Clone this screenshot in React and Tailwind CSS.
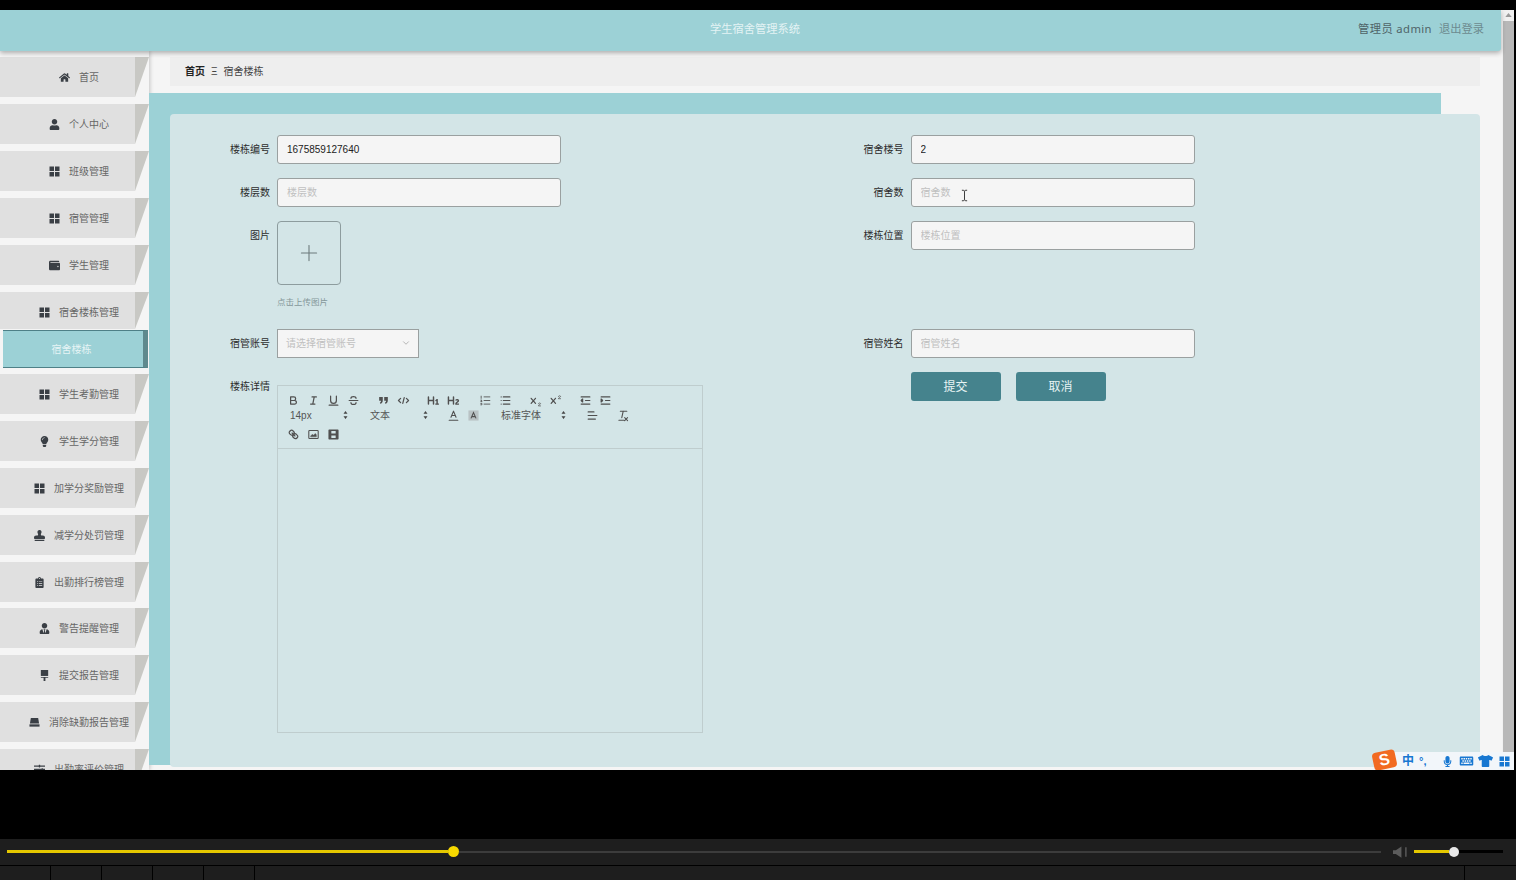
import { FaHome, FaUser, FaWallet, FaLightbulb, FaClipboardList, FaStamp, FaUserTie, FaSlidersH, FaMicrophone, FaKeyboard, FaTshirt } from "react-icons/fa";
import { ChevronDown, Plus } from "lucide-react";

const Grid = (props) => (
  <svg viewBox="0 0 11 11" {...props}>
    <path d="M0.500 0.500h4.500v4.500H0.500zM6 0.500h4.500v4.500H6zM0.500 6h4.500v4.500H0.500zM6 6h4.500v4.500H6z" fill="currentColor" />
  </svg>
);

const Brush = (props) => (
  <svg viewBox="0 0 12 12" {...props}>
    <path d="M2 0h8v6.500H2z" fill="currentColor" />
    <path d="M2 7.500h8v1H7v3.500H5V8.500H2z" fill="currentColor" />
  </svg>
);

const Tray = (props) => (
  <svg viewBox="0 0 12 12" {...props}>
    <path d="M2 1h8l1 6H1z" fill="currentColor" />
    <path d="M0.500 8h11v2.500h-11z" fill="currentColor" />
  </svg>
);

const menuTop = [
  { label: "首页", icon: FaHome },
  { label: "个人中心", icon: FaUser },
  { label: "班级管理", icon: Grid },
  { label: "宿管管理", icon: Grid },
  { label: "学生管理", icon: FaWallet },
];

const menuBottom = [
  { label: "学生考勤管理", icon: Grid },
  { label: "学生学分管理", icon: FaLightbulb },
  { label: "加学分奖励管理", icon: Grid },
  { label: "减学分处罚管理", icon: FaStamp },
  { label: "出勤排行榜管理", icon: FaClipboardList, tight: true },
  { label: "警告提醒管理", icon: FaUserTie },
  { label: "提交报告管理", icon: Brush },
  { label: "消除缺勤报告管理", icon: Tray },
  { label: "出勤率评价管理", icon: FaSlidersH },
];

const MenuItem = ({ label, icon: Icon, short, tight }) => (
  <div className={short ? "flex h-[37px] mb-[1px] shrink-0" : tight ? "flex h-[40px] mb-[6px] shrink-0" : "flex h-[40px] mb-[7px] shrink-0"}>
    <div
      className={
        short
          ? "w-[135px] bg-[#e0e0e0] flex items-center justify-center pl-[23px] pt-[3px] text-[10px] text-[#666]"
          : "w-[135px] bg-[#e0e0e0] flex items-center justify-center pl-[23px] text-[10px] text-[#666]"
      }
    >
      <Icon className="w-[11px] h-[11px] mr-[9px] text-[#3a3f45]" />
      <span className="whitespace-nowrap">{label}</span>
    </div>
    <div
      className={
        short
          ? "w-0 h-0 border-t-[37px] border-r-[14px] border-t-[#c8c8c4] border-r-transparent"
          : "w-0 h-0 border-t-[40px] border-r-[14px] border-t-[#c8c8c4] border-r-transparent"
      }
    />
  </div>
);

const Sidebar = () => (
  <aside className="w-[149px] shrink-0 h-full bg-[#f5f5f5] pt-[6px] flex flex-col overflow-hidden shadow-[1px_0_4px_rgba(0,0,0,0.2)]">
    {menuTop.map((m) => (
      <MenuItem key={m.label} {...m} />
    ))}
    <MenuItem label="宿舍楼栋管理" icon={Grid} short />
    {/* active child */}
    <div className="ml-[3px] w-[145px] h-[38px] mb-[6px] shrink-0 flex items-center justify-center pr-[3px] bg-[#9cd1d6] border-y border-y-[#4e8087] border-r-[5px] border-r-[#5f8a8e] text-[10px] text-[#e6f4f5]">
      宿舍楼栋
    </div>
    {menuBottom.map((m) => (
      <MenuItem key={m.label} {...m} />
    ))}
  </aside>
);

const Label = ({ children }) => (
  <label className="w-[100px] h-[29px] shrink-0 mr-[7px] text-right leading-[29px] text-[10px] text-[#2c2c2c]">{children}</label>
);

const Field = ({ label, value, placeholder, cursor }) => (
  <div className="flex">
    <Label>{label}</Label>
    <div className="relative">
      <input
        readOnly
        defaultValue={value}
        placeholder={placeholder}
        className="block w-[284px] h-[29px] px-[9px] pb-[1px] bg-[#f5f5f5] border border-[#9aa0a0] rounded-[3px] text-[10px] text-[#222] outline-none placeholder:text-[#c0c0c0]"
      />
      {cursor && (
        <svg viewBox="0 0 8 14" className="absolute left-[50px] top-[11px] w-[7px] h-[13px] text-[#222]">
          <path d="M1 1h2l1 1 1-1h2M4 2v10M1 13h2l1-1 1 1h2" fill="none" stroke="currentColor" strokeWidth="1" />
        </svg>
      )}
    </div>
  </div>
);

const Ico = ({ children, filled }) => (
  <span className="w-5 h-4 flex items-center justify-center shrink-0">
    <svg
      viewBox="0 0 18 18"
      className="w-[13px] h-[13px]"
      fill={filled ? "#505050" : "none"}
      stroke={filled ? "none" : "#505050"}
      strokeWidth="1.700"
      strokeLinecap="round"
      strokeLinejoin="round"
    >
      {children}
    </svg>
  </span>
);

const Picker = ({ label, className }) => (
  <span className={`flex items-center justify-between pl-[7px] pr-[5px] text-[10px] text-[#555] shrink-0 ${className}`}>
    {label}
    <svg viewBox="0 0 6 10" className="w-[5px] h-[8px]">
      <path d="M3 0l2.500 3.500h-5zM3 10L.5 6.500h5z" fill="#444" />
    </svg>
  </span>
);

const Toolbar = () => (
  <div className="h-[63px] border-b border-b-[#bfcdce] pt-[6px] pl-[5px] flex flex-col">
    <div className="h-4 flex items-center">
      <div className="flex mr-[10px]">
        <Ico><path d="M5,4H9.500A2.500,2.500,0,0,1,12,6.500v0A2.500,2.500,0,0,1,9.500,9H5V4Z" /><path d="M5,9h5.500A2.500,2.500,0,0,1,13,11.500v0A2.500,2.500,0,0,1,10.500,14H5V9Z" /></Ico>
        <Ico><path d="M7 4h6M5 14h6M8 14l2-10" /></Ico>
        <Ico><path d="M5,3V9a4,4,0,0,0,4,4h0a4,4,0,0,0,4-4V3M3 15.500h12" /></Ico>
        <Ico><path d="M3 9h12M12.500 6C12.500 4.500 11 3.500 9 3.500S5.500 4.500 5.500 6M12.500 12c0 1.500-1.500 2.500-3.500 2.500S5.500 13.500 5.500 12" /></Ico>
      </div>
      <div className="flex mr-[10px]">
        <Ico filled><path d="M3 4h5v5c0 3-1.500 4-3.500 4.500L4 12c1-.5 1.500-1 1.500-2.500H3zM10 4h5v5c0 3-1.500 4-3.500 4.500L11 12c1-.5 1.500-1 1.500-2.500H10z" /></Ico>
        <Ico><path d="M5 6L2 9l3 3M13 6l3 3-3 3M10 5l-2 8" /></Ico>
      </div>
      <div className="flex mr-[12px]">
        <Ico filled><path d="M10,4V14a1,1,0,0,1-2,0V10H3v4a1,1,0,0,1-2,0V4A1,1,0,0,1,3,4V8H8V4a1,1,0,0,1,2,0ZM16 13.200H15V7.600c0-.4-.2-.6-.6-.6h-.6a1,1,0,0,0-.8.300L11.600 8.600a.5.5,0,0,0,0,.9l.3.3a.5.5,0,0,0,.8,0l.1-.1.2-.3v3.800h-1c-.4,0-.6.200-.6.600v.4c0,.4.200.6.600.6h4c.4,0,.6-.2.6-.6v-.4c0-.4-.2-.6-.6-.6Z" /></Ico>
        <Ico filled><path d="M16.700,13.800v.4c0,.4-.2.6-.6.6H11.900c-.4,0-.6-.2-.6-.6V14c0-2.900,3.400-3.400,3.400-4.500a.8.8,0,0,0-.8-.8,1.200,1.200,0,0,0-.8.4c-.3.300-.6.4-.9.1l-.4-.3c-.3-.2-.4-.5-.2-.8a3,3,0,0,1,2.500-1.200,2.500,2.500,0,0,1,2.700,2.400c0,2.500-3.200,2.900-3.300,3.900h2.800C16.500,13.200,16.700,13.400,16.700,13.800ZM9,3A1,1,0,0,0,8,4V8H3V4A1,1,0,0,0,1,4V14a1,1,0,0,0,2,0V10H8v4a1,1,0,0,0,2,0V4A1,1,0,0,0,9,3Z" /></Ico>
      </div>
      <div className="flex mr-[10px]">
        <Ico><path d="M7 4h8M7 9h8M7 14h8M3 3v3M2.500 8.500h1.500l-1.500 2h1.500M2.500 13h1.500v2h-1.500" strokeWidth="1.200" /></Ico>
        <Ico><path d="M6 4h9M6 9h9M6 14h9M3 4h0M3 9h0M3 14h0" /></Ico>
      </div>
      <div className="flex mr-[10px]">
        <Ico><path d="M3 6l6 7M9 6l-6 7" /><path d="M13 13.500c0-1.500 3-1.500 3 0 0 1-3 1.500-3 3h3" strokeWidth="1" /></Ico>
        <Ico><path d="M3 6l6 7M9 6l-6 7" /><path d="M13 3.500c0-1.500 3-1.500 3 0 0 1-3 1.500-3 3h3" strokeWidth="1" /></Ico>
      </div>
      <div className="flex">
        <Ico><path d="M3 4h12M3 14h12M9 9h6" /><path d="M5 7v4l-2-2z" fill="#505050" /></Ico>
        <Ico><path d="M3 4h12M3 14h12M9 9h6" /><path d="M3 7v4l2-2z" fill="#505050" /></Ico>
      </div>
    </div>
    <div className="h-[14px] flex items-center">
      <Picker label="14px" className="w-[70px] mr-[10px]" />
      <Picker label="文本" className="w-[70px] mr-[10px]" />
      <Ico><path d="M3 15.500h12M5.500 11.500L9 3l3.500 8.500M6.500 9h5" strokeWidth="1.500" /></Ico>
      <span className="w-5 h-4 flex items-center justify-center shrink-0">
        <svg viewBox="0 0 18 18" className="w-[13px] h-[13px]" fill="none" stroke="#505050" strokeWidth="1.500">
          <rect x="2" y="2" width="14" height="14" fill="#b9c2c4" stroke="none" />
          <path d="M5.500 13L9 5l3.500 8M6.500 10.500h5" />
        </svg>
      </span>
      <Picker label="标准字体" className="w-[77px] ml-[11px] mr-[11px]" />
      <span className="mr-[10px]">
        <Ico><path d="M3 4h8M3 9h12M3 14h10" /></Ico>
      </span>
      <Ico><path d="M6 3h9M10 3L8 12M4 15.500h7M12 12l4 4M16 12l-4 4" strokeWidth="1.500" /></Ico>
    </div>
    <div className="h-4 mt-[4px] flex items-center">
      <Ico>
        <path d="M7 7l4 4" />
        <path d="M8.900,4.600a3.500,3.500,0,0,1,.4,4.700A3.500,3.500,0,0,1,4.600,8.900C3.200,7.500,2,6.400,4.200,4.200S7.500,3.200,8.900,4.600Z" />
        <path d="M13.400,9.100a3.500,3.500,0,0,0-4.700-.4,3.500,3.500,0,0,0,.4,4.700c1.400,1.400,2.500,2.500,4.700.4S14.800,10.500,13.400,9.100Z" />
      </Ico>
      <Ico>
        <rect x="2.500" y="3.500" width="13" height="11" rx="1" strokeWidth="1.500" />
        <path d="M5 12V11l2.500-2.500 1.500 1.500 2.500-2.500L13 9.500V12z" fill="#505050" strokeWidth="0.500" />
      </Ico>
      <Ico filled>
        <path fillRule="evenodd" d="M3 2h12a1 1 0 0 1 1 1v12a1 1 0 0 1-1 1H3a1 1 0 0 1-1-1V3a1 1 0 0 1 1-1zM6 4v3.500h6V4zM6 10.500V14h6v-3.500z" />
      </Ico>
    </div>
  </div>
);

const FormCard = () => (
  <div className="w-[1310px] h-[653px] shrink-0 bg-[#d3e5e7] rounded-[4px] pt-[21px] grid grid-cols-[633.500px_1fr] gap-y-[14px] content-start">
    <Field label="楼栋编号" value="1675859127640" />
    <Field label="宿舍楼号" value="2" />
    <Field label="楼层数" placeholder="楼层数" />
    <Field label="宿舍数" placeholder="宿舍数" cursor />

    <div className="flex h-[94px]">
      <Label>图片</Label>
      <div>
        <div className="w-[64px] h-[64px] border border-[#8d9c9e] rounded-[4px] flex items-center justify-center">
          <Plus className="w-[26px] h-[26px] text-[#6c7a7c]" strokeWidth={1} />
        </div>
        <p className="mt-[12px] text-[8.500px] leading-[10px] text-[#84979a]">点击上传图片</p>
      </div>
    </div>
    <Field label="楼栋位置" placeholder="楼栋位置" />

    <div className="flex">
      <Label>宿管账号</Label>
      <div className="w-[142px] h-[29px] pl-[8px] pr-[7px] pb-[1px] bg-[#f5f5f5] border border-[#9aa0a0] flex items-center justify-between text-[10px] text-[#c0c0c0]">
        请选择宿管账号
        <ChevronDown className="w-[10px] h-[10px] text-[#a8a8a8]" />
      </div>
    </div>
    <Field label="宿管姓名" placeholder="宿管姓名" />

    <div className="flex">
      <Label>楼栋详情</Label>
      <div className="mt-[13px] w-[426px] h-[348px] border border-[#bfcdce]">
        <Toolbar />
      </div>
    </div>
    <div className="flex gap-[15px] pl-[107px] items-start">
      <button className="w-[90px] h-[29px] bg-[#45838d] rounded-[3px] text-[12px] text-[#e8f4f4]">提交</button>
      <button className="w-[90px] h-[29px] bg-[#45838d] rounded-[3px] text-[12px] text-[#e8f4f4]">取消</button>
    </div>
  </div>
);

const SogouBar = () => (
  <div className="absolute right-0 bottom-0 flex items-end">
    <div className="w-[23px] h-[18px] mb-[1px] -mr-[5px] z-10 bg-[#f26a21] rounded-[4px] -rotate-12 flex items-center justify-center text-white font-bold text-[16px] leading-none">
      S
    </div>
    <div className="w-[123px] h-[18px] pl-[11px] bg-[#f2f6fa] flex items-center text-[#1777d1]">
      <span className="w-[17px] text-[12px] font-bold leading-none">中</span>
      <span className="w-[19px] text-[11px] font-bold leading-none">°,</span>
      <FaMicrophone className="w-[19px] h-[11px]" />
      <FaKeyboard className="w-[19px] h-[12px]" />
      <FaTshirt className="w-[19px] h-[12px]" />
      <Grid className="w-[19px] h-[11px]" />
    </div>
  </div>
);

const PlayerBar = () => (
  <div className="h-[41px] shrink-0 flex flex-col">
    <div className="h-[26px] bg-[#1e1e1e] pl-[7px] pb-[1px] flex items-center">
      <div className="w-[441px] h-[3px] bg-[#e5c800]" />
      <div className="w-[11px] h-[11px] rounded-full bg-[#f7d900] shrink-0" />
      <div className="w-[922px] h-[2px] bg-[#3c3c3c]" />
      <svg viewBox="0 0 16 12" className="w-[15px] h-[12px] ml-[12px] text-[#5c5c5c]">
        <path d="M0 4h3l6-4v12l-6-4H0zM13 1h1.500v10H13z" fill="currentColor" />
      </svg>
      <div className="ml-[6px] w-[35px] h-[3px] bg-[#e5c800]" />
      <div className="w-[10px] h-[10px] rounded-full bg-[#e8e8e8] shrink-0" />
      <div className="w-[44px] h-[3px] bg-black" />
    </div>
    <div className="flex-1 mt-[1px] flex gap-[1px] bg-black">
      <div className="w-[50px] bg-[#1e1e1e]" />
      <div className="w-[50px] bg-[#1e1e1e]" />
      <div className="w-[50px] bg-[#1e1e1e]" />
      <div className="w-[50px] bg-[#1e1e1e]" />
      <div className="w-[50px] bg-[#1e1e1e]" />
      <div className="w-[1209px] bg-[#1e1e1e]" />
      <div className="flex-1 bg-[#1e1e1e]" />
    </div>
  </div>
);

export default function App() {
  return (
    <div className="w-[1516px] h-[880px] bg-black flex flex-col overflow-hidden font-['Liberation_Sans','Noto_Sans_CJK_SC',sans-serif]">
      <div className="h-[10px] shrink-0" />
      <div className="relative h-[760px] w-[1514px] shrink-0 flex bg-[#f5f5f5] overflow-hidden">
        <div className="w-[1502px] shrink-0 flex flex-col">
          {/* top bar */}
          <header className="relative z-20 h-[41px] w-[1501px] shrink-0 bg-[#9cd1d6] rounded-br-[3px] shadow-[0_2px_5px_rgba(0,0,0,0.3)] flex items-center pl-[710px] pr-[17px] pb-[2px]">
            <span className="text-[11.250px] text-[#e4f3f4]">学生宿舍管理系统</span>
            <span className="ml-auto text-[11.250px] tracking-[0.4px] text-[#4f6468] font-['Noto_Sans','Noto_Sans_CJK_SC',sans-serif]">管理员 admin</span>
            <span className="ml-[7px] text-[11.250px] text-[#6d8b8f]">退出登录</span>
          </header>
          <div className="flex flex-1 min-h-0">
            <Sidebar />
            <main className="flex-1 min-w-0">
              <div className="ml-[21px] mt-[6px] w-[1310px] h-[29px] bg-[#eeeeee] pl-[15px] flex items-center text-[10px] text-[#444]">
                <span className="font-bold text-[#222]">首页</span>
                <span className="mx-[6px]">Ξ</span>
                <span>宿舍楼栋</span>
              </div>
              <div className="mt-[7px] w-[1292px] h-[672px] bg-[#9cd1d6] pt-[21px] pl-[21px]">
                <FormCard />
              </div>
            </main>
          </div>
        </div>
        {/* scrollbar */}
        <div className="w-[12px] shrink-0 bg-[#f1f1f1] flex flex-col items-center">
          <svg viewBox="0 0 8 5" className="w-[7px] h-[4px] mt-[3px] text-[#9a9a9a]">
            <path d="M4 0l4 5H0z" fill="currentColor" />
          </svg>
          <div className="mt-[4px] w-[11px] flex-1 bg-[#b8b8b8]" />
        </div>
        <SogouBar />
      </div>
      <div className="flex-1" />
      <PlayerBar />
    </div>
  );
}
